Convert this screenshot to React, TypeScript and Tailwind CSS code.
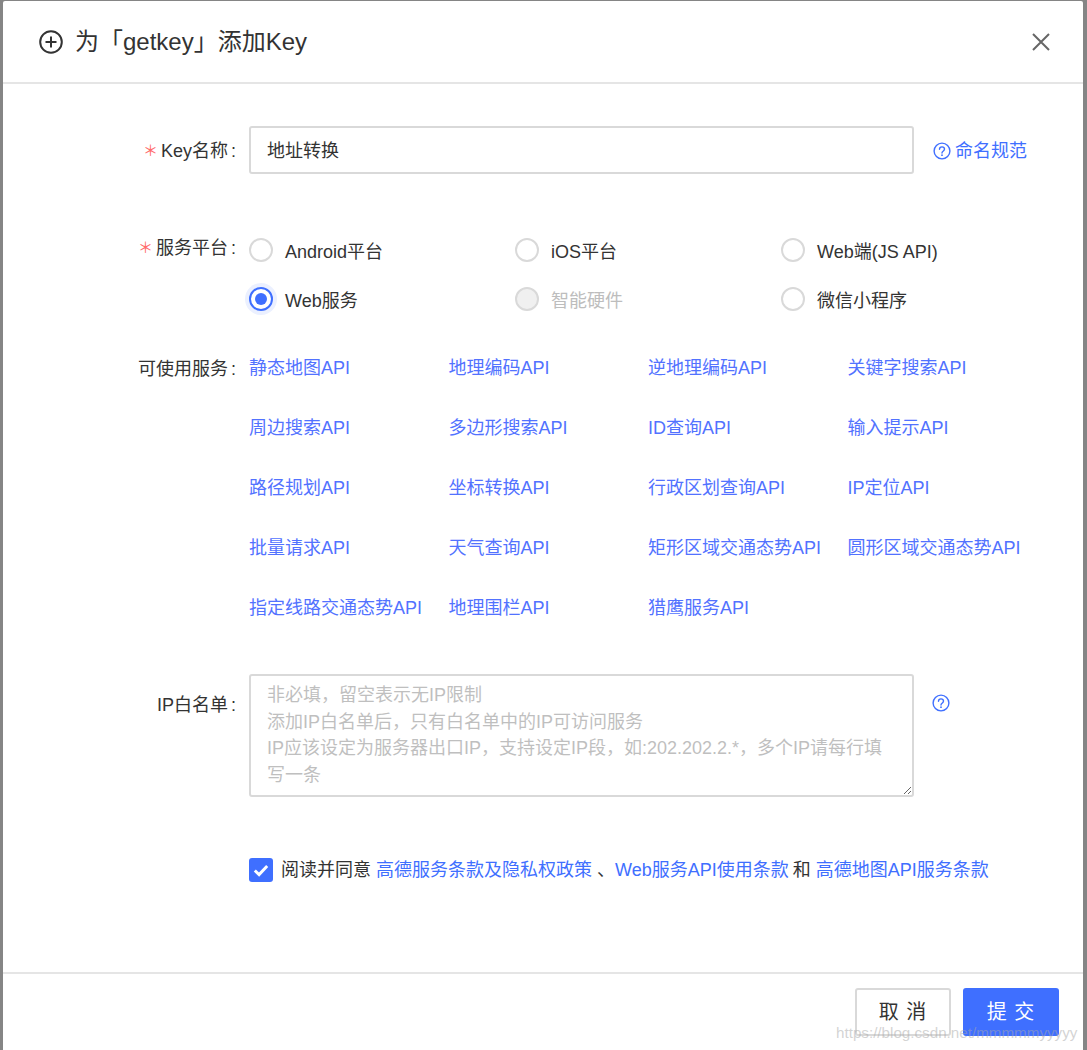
import React from "react";

const font = { fontFamily: '"Liberation Sans","Noto Sans CJK SC",sans-serif' };

const links = [
  "静态地图API","地理编码API","逆地理编码API","关键字搜索API",
  "周边搜索API","多边形搜索API","ID查询API","输入提示API",
  "路径规划API","坐标转换API","行政区划查询API","IP定位API",
  "批量请求API","天气查询API","矩形区域交通态势API","圆形区域交通态势API",
  "指定线路交通态势API","地理围栏API","猎鹰服务API",
];

function Help({ className }: { className: string }) {
  return (
    <svg viewBox="0 0 18 18" className={className} fill="none" stroke="#3f6fff" strokeWidth="1.4">
      <circle cx="9" cy="9" r="7.9" />
      <path d="M6.5 7.2C6.5 5.8 7.6 4.9 9 4.9s2.5.9 2.5 2.2c0 1.1-.7 1.6-1.4 2.1-.7.5-1.1.9-1.1 1.8" strokeLinecap="round" />
      <circle cx="9" cy="13.2" r=".9" fill="#3f6fff" stroke="none" />
    </svg>
  );
}

function Radio({ label, state }: { label: string; state?: "on" | "off" }) {
  return (
    <div className="flex items-center h-[26px]">
      {state === "on" ? (
        <span className="w-[32px] h-[32px] -mx-[4px] rounded-full bg-[#ebf0ff] flex items-center justify-center shrink-0">
          <span className="w-[24px] h-[24px] rounded-full border-2 border-[#3f6fff] bg-white flex items-center justify-center">
            <span className="w-[12px] h-[12px] rounded-full bg-[#3f6fff]" />
          </span>
        </span>
      ) : (
        <span className={`w-[24px] h-[24px] rounded-full border-2 border-[#d9d9d9] shrink-0 ${state === "off" ? "bg-[#f0f0f0]" : "bg-white"}`} />
      )}
      <span className={`ml-[12px] pt-[4px] text-[18px] ${state === "off" ? "text-[#bdbdbd]" : "text-[#333333]"}`}>{label}</span>
    </div>
  );
}

function Label({ star, text, className }: { star?: boolean; text: string; className: string }) {
  return (
    <div className={`w-[233px] shrink-0 flex justify-end items-center text-[18px] text-[#333333] whitespace-nowrap ${className}`}>
      {star && <span className="text-[15px] text-[#ff6b6b] mr-[3px]">＊</span>}
      <span>{text}</span>
      <span className="ml-[3px]">:</span>
    </div>
  );
}

export default function App() {
  return (
    <div style={font} className="relative w-[1087px] h-[1050px] overflow-hidden bg-[#858585] pt-[1px] pl-[3px] pr-[4px]">
      <div className="bg-white h-[1049px] rounded-tl-[2px] rounded-tr-[2px] flex flex-col">
        <header className="h-[83px] shrink-0 border-b-2 border-[#e5e5e5] flex items-center pl-[36px] pr-[32px]">
          <svg viewBox="0 0 24 24" className="w-[24px] h-[24px]" fill="none" stroke="#333333">
            <circle cx="12" cy="12" r="10.8" strokeWidth="2" />
            <path d="M12 6.5v11M6.5 12h11" strokeWidth="2" />
          </svg>
          <h1 className="ml-[12px] text-[24px] text-[#333333] font-normal">为「getkey」添加Key</h1>
          <svg viewBox="0 0 20 20" className="ml-auto w-[20px] h-[20px]" fill="none" stroke="#666666" strokeWidth="2">
            <path d="M2 2l16 16M18 2L2 18" />
          </svg>
        </header>

        <main className="flex-1 flex flex-col pt-[42px]">
          <div className="flex items-center">
            <Label star text="Key名称" className="self-center pt-[2px]" />
            <div className="ml-[13px] w-[665px] h-[48px] border-2 border-[#d9d9d9] rounded-[3px] flex items-center pl-[16px] pt-[2px] text-[18px] text-[#333333]">地址转换</div>
            <div className="ml-[19px] pt-[2px] flex items-center text-[18px] text-[#3f6fff] whitespace-nowrap">
              <Help className="w-[18px] h-[18px] mr-[4px]" />命名规范
            </div>
          </div>

          <div className="flex mt-[61px]">
            <Label star text="服务平台" className="self-start" />
            <div className="ml-[13px] w-[798px] grid grid-cols-3 gap-y-[23px] pt-[2px]">
              <Radio label="Android平台" />
              <Radio label="iOS平台" />
              <Radio label="Web端(JS API)" />
              <Radio label="Web服务" state="on" />
              <Radio label="智能硬件" state="off" />
              <Radio label="微信小程序" />
            </div>
          </div>

          <div className="flex mt-[44px]">
            <Label text="可使用服务" className="self-start" />
            <div className="ml-[13px] w-[798px] grid grid-cols-4 auto-rows-[60px] text-[18px] text-[#5272ff] leading-[26px] -mt-[1px]">
              {links.map((l) => (
                <a key={l} className="whitespace-nowrap">{l}</a>
              ))}
            </div>
          </div>

          <div className="flex mt-[19px]">
            <Label text="IP白名单" className="self-start pt-[18px]" />
            <textarea
              readOnly
              className="ml-[13px] w-[665px] h-[123px] border-2 border-[#d9d9d9] rounded-[3px] pl-[16px] pr-[16px] pt-[6px] text-[18px] leading-[26.6px] outline-none placeholder:text-[#bfbfbf]"
              placeholder={"非必填，留空表示无IP限制\n添加IP白名单后，只有白名单中的IP可访问服务\nIP应该设定为服务器出口IP，支持设定IP段，如:202.202.2.*，多个IP请每行填写一条"}
            />
            <Help className="ml-[18px] mt-[20px] w-[18px] h-[18px]" />
          </div>

          <div className="flex items-center ml-[246px] mt-[60px] text-[18px] whitespace-nowrap h-[26px]">
            <span className="w-[24px] h-[24px] bg-[#3f6fff] rounded-[3px] flex items-center justify-center mr-[8px]">
              <svg viewBox="0 0 16 16" className="w-[18px] h-[18px]" fill="none" stroke="white" strokeWidth="2.6">
                <path d="M2.5 8.5l3.8 3.6 7.2-7.6" />
              </svg>
            </span>
            <span className="text-[#333333]">阅读并同意</span>
            <span className="text-[#3f6fff] ml-[5px]">高德服务条款及隐私权政策</span>
            <span className="text-[#333333] ml-[5px]">、</span>
            <span className="text-[#3f6fff]">Web服务API使用条款</span>
            <span className="text-[#333333] ml-[4px]">和</span>
            <span className="text-[#3f6fff] ml-[5px]">高德地图API服务条款</span>
          </div>
        </main>

        <footer className="h-[78px] shrink-0 border-t-2 border-[#e5e5e5] flex justify-end items-start pt-[14px] pr-[24px] gap-[12px]">
          <button className="w-[96px] h-[48px] border-2 border-[#d9d9d9] rounded-[3px] bg-white text-[20px] tracking-[1px] text-[#333333]">取 消</button>
          <button className="w-[96px] h-[48px] rounded-[3px] bg-[#3f6fff] text-[20px] tracking-[1px] text-white">提 交</button>
        </footer>
      </div>
      <div className="absolute left-[836px] top-[1023px] text-[15.2px] leading-[20px] text-[#a8a8a8]/50 whitespace-nowrap">https://blog.csdn.net/mmmmmyyyyy</div>
    </div>
  );
}
